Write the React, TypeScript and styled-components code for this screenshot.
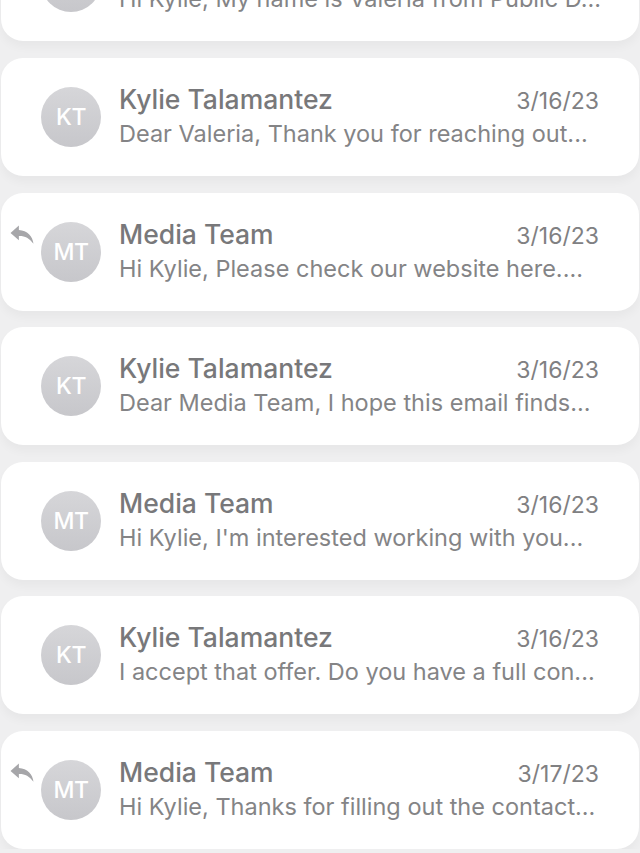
import React from 'react';
import styled, { createGlobalStyle } from 'styled-components';

type Mail = {
  initials: string;
  name: string;
  date: string;
  preview: string;
  replied?: boolean;
};

const mails: Mail[] = [
  { initials: 'MT', name: 'Media Team', date: '3/16/23', preview: 'Hi Kylie, My name is Valeria from Public D...' },
  { initials: 'KT', name: 'Kylie Talamantez', date: '3/16/23', preview: 'Dear Valeria, Thank you for reaching out...' },
  { initials: 'MT', name: 'Media Team', date: '3/16/23', preview: 'Hi Kylie, Please check our website here....', replied: true },
  { initials: 'KT', name: 'Kylie Talamantez', date: '3/16/23', preview: 'Dear Media Team, I hope this email finds...' },
  { initials: 'MT', name: 'Media Team', date: '3/16/23', preview: "Hi Kylie, I'm interested working with you..." },
  { initials: 'KT', name: 'Kylie Talamantez', date: '3/16/23', preview: 'I accept that offer. Do you have a full con...' },
  { initials: 'MT', name: 'Media Team', date: '3/17/23', preview: 'Hi Kylie, Thanks for filling out the contact...', replied: true },
];

function ReplyIcon() {
  return (
    <svg width="24" height="20" viewBox="0 0 23 19" aria-hidden>
      <path
        d="M8.5 0.5 L0.5 7.5 L8.5 14.5 L8.5 10.4 C14 10.2 18.5 12.2 22.5 18 C21.8 10.5 16.5 5 8.5 4.6 Z"
        fill="#a6a6a9"
      />
    </svg>
  );
}

function App() {
  return (
    <>
      <GlobalStyle />
      <List>
        {mails.map((m, i) => (
          <Card key={i}>
            {m.replied && (
              <ReplyMark>
                <ReplyIcon />
              </ReplyMark>
            )}
            <Avatar>{m.initials}</Avatar>
            <Body>
              <TopRow>
                <Name>{m.name}</Name>
                <Date>{m.date}</Date>
              </TopRow>
              <Preview>{m.preview}</Preview>
            </Body>
          </Card>
        ))}
      </List>
    </>
  );
}

export default App;

const GlobalStyle = createGlobalStyle`
  html, body {
    margin: 0;
    padding: 0;
    background: #efeff0;
    overflow: hidden;
  }
  body {
    font-family: Inter, "Noto Sans", sans-serif;
    -webkit-font-smoothing: antialiased;
  }
`;

const List = styled.div`
  display: flex;
  flex-direction: column;
  gap: 16.6px;
  margin-top: -76.6px;
  padding: 0 1px;
`;

const Card = styled.div`
  position: relative;
  height: 118px;
  display: flex;
  align-items: center;
  gap: 18px;
  padding: 0 40px 0 40px;
  background: #ffffff;
  border-radius: 22px;
  box-shadow: 0 6px 10px rgba(0, 0, 0, 0.035);
`;

const ReplyMark = styled.div`
  position: absolute;
  left: 9px;
  top: 32px;
  display: flex;
`;

const Avatar = styled.div`
  flex: 0 0 60px;
  width: 60px;
  height: 60px;
  border-radius: 50%;
  background: linear-gradient(180deg, #d6d6d9 0%, #c7c7cb 100%);
  color: #ffffff;
  font-size: 23px;
  font-weight: 500;
  display: flex;
  align-items: center;
  justify-content: center;
  letter-spacing: -0.5px;
`;

const Body = styled.div`
  flex: 1;
  min-width: 0;
  display: flex;
  flex-direction: column;
`;

const TopRow = styled.div`
  display: flex;
  justify-content: space-between;
  align-items: baseline;
  height: 34px;
`;

const Name = styled.span`
  font-size: 26.5px;
  font-weight: 500;
  color: #78787a;
  line-height: 34px;
`;

const Date = styled.span`
  font-size: 23px;
  font-weight: 400;
  color: #808082;
  line-height: 34px;
`;

const Preview = styled.div`
  font-size: 23.5px;
  font-weight: 400;
  color: #848486;
  line-height: 36px;
  white-space: nowrap;
`;
